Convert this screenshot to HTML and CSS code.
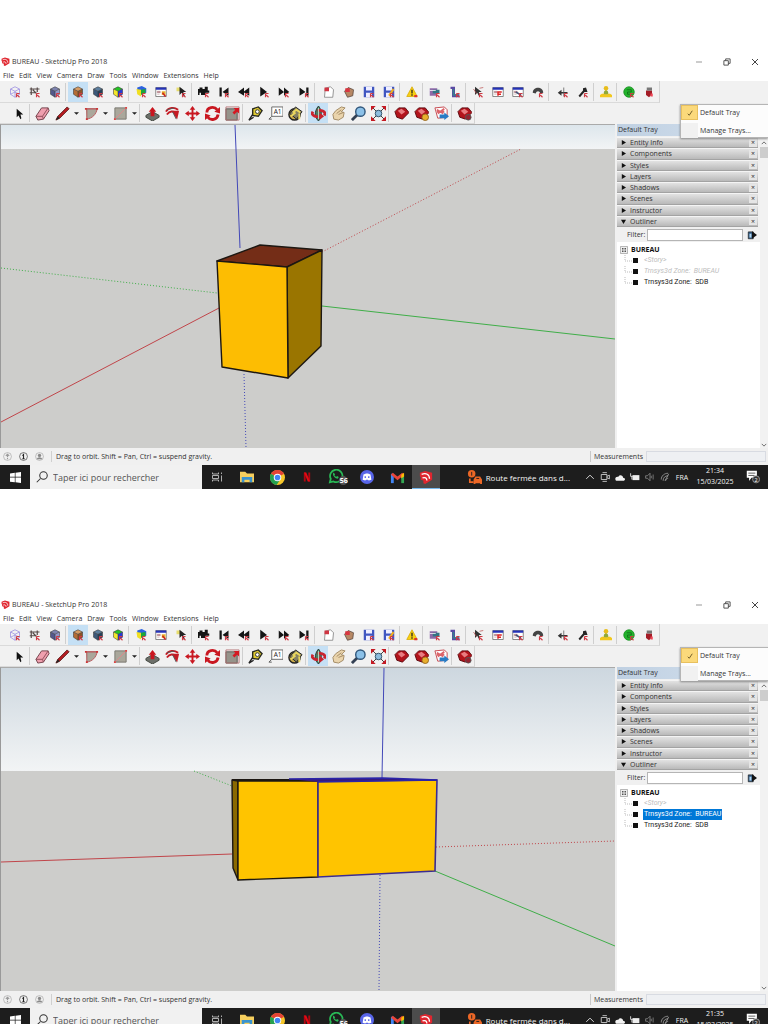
FILE: index.html
```html
<!DOCTYPE html>
<html lang="fr">
<head>
<meta charset="utf-8">
<meta name="viewport" content="width=device-width, initial-scale=1">
<title>BUREAU - SketchUp Pro 2018</title>
<link rel="stylesheet" href="styles.css">
</head>
<body>
<main class="page" id="page"></main>
<script src="app.js"></script>
</body>
</html>
```

FILE: styles.css
```css
* { box-sizing: border-box; }
body { margin: 0; background: #fff; font-family: "Open Sans", "Noto Sans", sans-serif; font-size: 7px; line-height: 11px; color: #333; }
button, input { font: inherit; color: inherit; border: 0; padding: 0; margin: 0; background: none; }
ul { list-style: none; margin: 0; padding: 0; }
a { color: inherit; text-decoration: none; }
svg { display: block; flex: none; }

.page { height: 100vh; overflow: hidden; display: flex; flex-direction: column; gap: 108px; padding-top: 54px; }
.window { flex: none; position: relative; }

.titlebar { display: flex; align-items: center; height: 15px; gap: 2px; padding: 0 9px 0 1px; }
.titlebar h1 { font-size: 7px; font-weight: 400; margin: 0; flex: 1; }
.controls { display: flex; gap: 20px; }
.menubar { display: flex; gap: 5px; height: 12px; padding-left: 3px; }

.toolbars { background: #f1f1f1; }
.toolbar { display: flex; align-items: center; height: 22px; width: max-content; border-right: 1px solid #d3d3d3; border-bottom: 1px solid #dadada; padding-left: 5px; }
.toolbar.large { padding-left: 9px; height: 21px; }
.tool { width: 20px; height: 20px; display: grid; place-items: center; }
.tool.active { background: #c5e0f5; }
.tool svg { width: 12px; height: 12px; }
.large .tool svg { width: 15px; height: 15px; }
.sep { width: 3px; height: 18px; border-left: 1px solid #cfcfcf; }
.sep.wide { width: 5px; }
.drop { width: 9px; height: 20px; display: grid; place-items: center; }

.workspace { display: grid; grid-template-columns: minmax(0, 1fr) 153px; height: 324px; background: #f0f0f0; }
.view { border-left: 1px solid #999; border-top: 1px solid #aaa; }
.view svg { width: 100%; height: 100%; }
.tray { display: grid; grid-template-columns: minmax(0, 1fr) 8px; padding-left: 2px; }
.tray-main { display: flex; flex-direction: column; }
.tray-title { margin: 0; font-size: 7px; font-weight: 400; height: 12px; padding-left: 1px; background: linear-gradient(90deg, #bfd0e2, #d5e1ee); }
.panels { display: grid; grid-auto-rows: 1fr; height: 91px; padding: 1px 2px 0 0; }
.panel { display: flex; align-items: center; gap: 4px; padding: 0 1px 0 4px; background: linear-gradient(#e2e2e2, #b9b9b9); border-top: 1px solid #f4f4f4; border-bottom: 1px solid #a3a3a3; line-height: 9px; }
.panel span { flex: 1; }
.panel button { width: 8px; height: 8px; background: #e5e5e5; line-height: 7px; font-size: 7px; }
.filter { display: flex; align-items: center; gap: 2px; height: 15px; padding: 0 1px 0 10px; }
.filter input { flex: 1; min-width: 0; height: 12px; background: #fff; border: 1px solid #b5b5b5; }
.filter button { width: 14px; display: grid; place-items: center; }
.tree { flex: 1; background: #fff; padding: 2px 0 0 3px; }
.node { display: flex; align-items: center; gap: 3px; height: 11px; }
.node.root { font-weight: 700; color: #111; }
.node.child { color: #222; padding-left: 4px; font-family: Roboto, "Open Sans", sans-serif; }
.node.hiddenzone { color: #bdbdbd; font-style: italic; }
.node .label { white-space: pre; padding: 0 1px; }
.node.selected .label { background: #0078d7; color: #fff; }
.scroll { display: flex; flex-direction: column; align-items: center; padding: 17px 0 1px; background: #f2f2f2; }
.thumb { width: 8px; height: 11px; background: #cdcdcd; margin-top: 2px; }
.scroll .down { margin-top: auto; }

.popup { position: absolute; right: 0; top: 50px; width: 88px; height: 34px; background: #fcfcfc; border: 1px solid #b5b5b5; border-right: 0; box-shadow: 0 1px 2px #0006; display: flex; flex-direction: column; gap: 3px; }
.popup button { display: flex; align-items: center; gap: 2px; height: 15px; text-align: left; }
.popup i { width: 17px; height: 15px; display: grid; place-items: center; background: #f1f1f1; }
.popup .checked i { background: #fbd97b; border: 1px solid #e8c05e; }

.status { display: flex; align-items: center; height: 17px; background: #f0f0f0; padding: 0 2px 0 3px; gap: 7px; }
.status p { margin: 0; flex: 1; border-left: 1px solid #d0d0d0; padding-left: 4px; }
.status label { border-left: 1px solid #c8c8c8; padding-left: 3px; }
.status .measure { width: 120px; height: 11px; border: 1px solid #d8dbe2; margin-left: -4px; background: #eef0f3; }

.taskbar { display: flex; height: 24px; background: #1d1d1d; color: #f4f4f4; }
.taskbar button { display: grid; place-items: center; }
.start { width: 30px; }
.search { width: 172px; display: flex; align-items: center; gap: 5px; padding-left: 6px; background: #f1f1f1; color: #444; font-size: 9px; }
.search input { flex: 1; min-width: 0; }
.search input::placeholder { color: #555; opacity: 1; }
.apps { display: flex; }
.apps button { width: 30px; }
.apps .active { background: #4c4c4c; border-bottom: 1px solid #76b9ed; width: 28px; }
.news { display: flex; align-items: center; gap: 4px; font-size: 8px; margin-left: auto; }
.system { display: flex; align-items: center; margin-left: 12px; }
.system button { width: 15px; }
.system .lang { width: 20px; font-size: 7px; }
.clock { width: 46px; text-align: center; font-size: 7px; line-height: 11px; height: 24px; }
.system .notes { width: 30px; }
```

FILE: app.js
```js
const svg = (body, w = 12, h = w, box = '0 0 16 16') =>
  `<svg width="${w}" height="${h}" viewBox="${box}" aria-hidden="true" fill="none">${body}</svg>`;

// Small red arrow shared by the simulation plug-in tools
const mark = '<path d="M10 10v5M10 10h4M11 12l3 3" stroke="#cf3a44" stroke-width="1.5"/>';
const film = inner => `<g fill="#151515">${inner}</g>${mark}`;
const cube = (top, left, right) =>
  `<path d="M2 4l6-3 6 3-6 3z" fill="${top}"/><path d="M2 4l6 3v8l-6-4z" fill="${left}"/><path d="M14 4L8 7v8l6-4z" fill="${right}"/><path d="M2 4l6-3 6 3v7l-6 4-6-4zM2 4l6 3 6-3M8 7v8" stroke="#333" stroke-width=".7"/>`;
const dialog = '<path d="M1 2h14v12H1z" fill="#fff" stroke="#666"/><path d="M1 2h14v3H1z" fill="#2432b8"/><path d="M3 7h4v2H3zM3 11h3" fill="#b89" stroke="#a77" stroke-width=".6"/>';
const floppy = '<path d="M1 1h14v14H1z" fill="#4056c0"/><path d="M4 1h8v5H4zM4 9h8v6H4z" fill="#eef"/>';
const ruby = '<path d="M1 6l4-4 7 0 4 5-7 7-6-2z" fill="#b3141c" stroke="#5d0b10"/><path d="M4 5l4-2 4 3-4 3z" fill="#e97c80"/>';

const art = {
  wire: '<path d="M2 4l6-3 6 3v7l-6 4-6-4zM2 4l6 3 6-3M8 7v8M2 11l6-3 6 3" stroke="#9a8ce0"/>' + mark,
  hiddenLine: '<path d="M1 4h13M3 2v10M1 9h8M11 2v6M5 5l5 5" stroke="#574b49" stroke-width="1.6"/>' + mark,
  xray: cube('#7d83ae', '#53588a', '#9297c8') + mark,
  shaded: cube('#d59a62', '#b36c35', '#8f5228') + mark,
  textured: cube('#5c7e9e', '#3c5878', '#264059') + mark,
  color: cube('#23c423', '#f3e72b', '#2739d8') + mark,
  colorEdit: '<path d="M3 2l6-2 6 3v6l-7 2-5-3z" fill="#2c62e0"/><path d="M2 4l6 1v9l-5-3z" fill="#f0df21"/><path d="M8 5l6-1v5l-6 3z" fill="#1fa636"/>' + mark,
  panel: dialog + '<path d="M9 7h5v5H9z" fill="#e8b32e"/><path d="M10 9l4 5" stroke="#c22" stroke-width="2"/>',
  pick: '<path d="M2 2h5v5H2z" fill="#e7dd6c"/><path d="M6 1v11l3-3 2 5 2-1-2-5h4z" fill="#222"/>' + mark,
  camera: film('<path d="M2 2h4v2h3V1h4v5h2v3H2v3H0V4h2z"/><path d="M4 8h6v4H4z"/>'),
  first: film('<path d="M2 2h3v12H2zM14 2v11L6 8z"/>'),
  rewind: film('<path d="M8 2v11L0 8zM15 2v11L7 8z"/>'),
  play: film('<path d="M3 1l9 7-9 6z"/>'),
  forward: film('<path d="M1 2l7 6-7 5zM8 2l7 6-7 5z"/>'),
  last: film('<path d="M2 2l8 6-8 5zM11 2h3v11h-3z"/>'),
  doc: '<path d="M3 3l7-2 4 4-1 10H2z" fill="#fff" stroke="#777"/><path d="M2 2h6v5H2z" fill="#cf3542"/>',
  folder: '<path d="M2 7l5-5 7 3-1 8-7 2z" fill="#b78865" stroke="#54433a"/><path d="M3 3h6v5H3z" fill="#d83540"/>',
  save: floppy + mark,
  saveAs: floppy + '<path d="M7 12l6-9 2 2-6 9z" fill="#f2ad1d"/>' + mark,
  warn: '<path d="M8 1l7 13H1z" fill="#f9cf11" stroke="#d5a900"/><path d="M8 5v5M8 11v2" stroke="#222" stroke-width="1.7"/><path d="M11 12h4v3h-4z" fill="#d33"/>',
  zoneA: '<path d="M1 3h10v10H1z" fill="#8f6aa8"/><path d="M5 5h9v5H5z" fill="#327584"/><path d="M1 6h8" stroke="#fff"/>' + mark,
  zoneB: '<path d="M2 1h6v10h6v4H4V4H2z" fill="#5a49a3"/><path d="M6 4v8h7" stroke="#35828c" stroke-width="2"/>' + mark,
  cursorMark: '<path d="M4 1v11l3-3 2 4 2-1-2-4h4z" fill="#333"/><path d="M10 3l5-1M2 4l4 6" stroke="#b55"/>' + mark,
  dlgA: dialog + '<path d="M8 7v6M8 8h5M8 11h4" stroke="#d22" stroke-width="2"/>',
  dlgB: dialog + '<path d="M5 8l7 4" stroke="#457" stroke-width="2"/>' + mark,
  gauge: '<path d="M1 9c0-9 14-9 14 0l-4 1c-1-4-5-4-6 0z" fill="#444"/>' + mark,
  arrows: '<path d="M1 9l5-4v3h8v2H6v3z" fill="#333"/><path d="M9 2v12" stroke="#555"/>' + mark,
  wrench: '<path d="M12 2l-4 1v3l-6 7 2 2 6-7h4z" fill="#252525"/>' + mark,
  axes: '<path d="M8 4v5l-6 4M8 9l6 4" stroke="#e5b911" stroke-width="2"/><circle cx="8" cy="3" r="3" fill="#e8bd1c"/><circle cx="8" cy="9" r="3" fill="#8fa83a"/><path d="M0 12l3-2 3 2v3H0zM10 12l3-2 3 2v3h-6zM6 11h4v4H6z" fill="#f2c81d"/>',
  green: '<circle cx="8" cy="8" r="7" fill="#22b32c" stroke="#148b1e"/><path d="M5 5h6v3H6v3h3" stroke="#116516"/>' + mark,
  bug: '<path d="M4 6h8v5l-4 4-4-3z" fill="#a31b25"/><path d="M5 2h7v4H5z" fill="#777"/><path d="M10 10h3v4h-3z" fill="#e45"/>',

  select: '<path d="M5 3v9l2-2 2 4 1-1-1-4h3z" fill="#111"/>',
  eraser: '<path d="M1 11L7 2h7l1 3-6 9-6 1z" fill="#ef9fae" stroke="#71404a"/><path d="M1 11h7l6-9M8 11l1 3" stroke="#8d4d58"/>',
  pencil: '<path d="M1 15l2-4L13 1l2 2L5 13z" fill="#b81c21" stroke="#62201f"/><path d="M1 15l2-4 2 2z" fill="#222"/>',
  arc: '<path d="M2 3h12C13 9 9 13 3 14z" fill="#aaa79b"/><path d="M2 3h12C13 9 9 13 3 14V3L14 3" stroke="#b8555a"/><path d="M1 2h2v2H1zM13 2h2v2h-2zM2 13h2v2H2z" fill="#c33"/>',
  rect: '<path d="M2 2h12v12H2z" fill="#aaa79b" stroke="#77766e"/><path d="M2 14L14 2" stroke="#df888b"/><path d="M1 13h2v2H1zM13 1h2v2h-2z" fill="#d44"/>',
  push: '<path d="M1 10l7-4 7 4v2l-7 4-7-4z" fill="#6d706a" stroke="#40443e"/><path d="M6 11V6H4l4-5 4 5h-2v5z" fill="#c9161f"/>',
  follow: '<path d="M1 6C4 1 10 1 14 4M2 9c3-4 7-4 10-1" stroke="#c51a23" stroke-width="2"/><path d="M8 5l7 0-2 9-3-4z" fill="#c51a23"/><path d="M2 4l8-2M8 6l4 8" stroke="#555"/>',
  move: '<path d="M8 0l3 4H9v3h3V5l4 3-4 3V9H9v3h2l-3 4-3-4h2V9H4v2L0 8l4-3v2h3V4H5z" fill="#c91720"/>',
  rotate: '<path d="M2 7c0-6 8-7 11-3M14 9c-1 6-8 7-11 3" stroke="#c91720" stroke-width="3"/><path d="M16 1v7l-6-2zM0 15V8l6 2z" fill="#c91720"/>',
  scale: '<path d="M1 3h12v12H1z" fill="#96938a" stroke="#55534e"/><path d="M1 1h14v14H1z" stroke="#b8777a"/><path d="M8 7l3-3-2-2h6v6l-2-2-3 3z" fill="#d51822"/>',
  tape: '<path d="M5 3l6-2 4 4-4 6-6-1z" fill="#dfca31" stroke="#292a1e" stroke-width="1.5"/><circle cx="10" cy="6" r="2" fill="#fff" stroke="#333"/><path d="M5 9l-4 6 5-3" stroke="#222" stroke-width="1.5"/>',
  label: '<path d="M4 1h12v10H4z" fill="#fff" stroke="#666"/><path d="M4 11l-3 3h3" stroke="#555"/><text x="6" y="9" font-size="7" fill="#222">A1</text>',
  paint: '<circle cx="7" cy="9" r="6" fill="#c8a949" stroke="#222" stroke-width="1.5"/><path d="M2 8l6-7 7 5-6 8z" fill="#858062" stroke="#222"/><path d="M5 7l4-3 4 3M3 11l5-4M12 8v6" stroke="#ead65d" stroke-width="2"/>',
  orbit: '<path d="M8 0c-5 6-4 12 0 16 4-5 4-11 0-16z" fill="#4c7d60" stroke="#243d35"/><path d="M2 6c-3 5 5 6 9 5M14 10c3-4-3-6-7-5" stroke="#c9242f" stroke-width="3"/><path d="M8 2v12" stroke="#b8d5c3"/><path d="M9 7l5 4-5 4z" fill="#c9242f"/>',
  pan: '<path d="M3 14l-1-5 3-4 6-4 4 1-4 4 3 1-1 5-5 3z" fill="#ead4ac" stroke="#a18963"/><path d="M6 8l5-4M8 9l5-2" stroke="#a18963"/>',
  zoom: '<path d="M1 15l6-6" stroke="#334053" stroke-width="3"/><circle cx="10" cy="6" r="5" fill="#8cc1e8" stroke="#31577b" stroke-width="1.5"/>',
  extents: '<path d="M2 2l12 12M14 2L2 14" stroke="#333"/><path d="M0 0h5L0 5zM16 0v5l-5-5zM0 16v-5l5 5zM16 16h-5l5-5z" fill="#c51922"/><circle cx="8" cy="8" r="3.5" fill="#8ebddd" stroke="#2c4d66"/>',
  ware: ruby,
  wareShare: ruby + '<circle cx="12" cy="12" r="3.5" fill="#e8af2d" stroke="#956620"/>',
  layout: '<path d="M1 2l10-1 3 3v8l-10 1z" fill="#fff" stroke="#c4454c"/><path d="M3 4l7 4M4 8l7-5M3 6h8" stroke="#db646a" stroke-width="2"/><path d="M6 9h5V7l5 4-5 4v-2H6z" fill="#287bc4"/>',
  extension: ruby + '<circle cx="12" cy="12" r="3" fill="#972330" stroke="#555"/>'
};

const smallTools = 'wire hiddenLine xray | shaded* textured color | colorEdit panel pick | camera first rewind play forward last || doc folder save saveAs | warn | zoneA zoneB | cursorMark dlgA dlgB gauge || arrows wrench | axes | green bug';
const largeTools = 'select | eraser pencil+ arc+ rect+ | push follow move rotate scale | tape label paint | orbit* pan zoom extents | ware wareShare layout | extension';

const arrowDown = svg('<path d="M0 0h6L3 3z" fill="#222"/>', 5, 3, '0 0 6 3');
const tools = list => list.split(' ').map(item => {
  if (item === '|') return '<span class="sep"></span>';
  if (item === '||') return '<span class="sep wide"></span>';
  const name = item.replace(/[*+]/, '');
  const button = `<button class="tool${item.endsWith('*') ? ' active' : ''}" aria-label="${name}">${svg(art[name])}</button>`;
  return button + (item.endsWith('+') ? `<button class="drop" aria-label="${name} options">${arrowDown}</button>` : '');
}).join('');

const logo = size => svg('<path d="M1 3l6-2 8 2v8l-8 5-2-1v-3l-3-1V8L1 7z" fill="#e0262f"/><path d="M3 5c5-2 9 0 9 5M4 9c3-1 5 0 5 3" stroke="#fff" stroke-width="1.5"/>', size);

const line = (x1, y1, x2, y2, color, dotted) =>
  `<path d="M${x1} ${y1}L${x2} ${y2}" stroke="${color}"${dotted ? ' stroke-dasharray="1 2"' : ''} stroke-width="1"/>`;
const red = '#c0454a', green = '#3fae48', blue = '#4248b8';

const sky = (id, y, h, from) => `<defs><linearGradient id="${id}" x2="0" y2="1"><stop stop-color="${from}"/><stop offset="1" stop-color="#f2f4f5"/></linearGradient></defs>
  <path d="M0 ${y}h616v${h}H0z" fill="url(#${id})"/>`;

const sceneOne = `<svg viewBox="1 125 614 323" preserveAspectRatio="none" role="img" aria-label="Zone SDB">
  <path d="M0 125h616v324H0z" fill="#cdcdcb"/>${sky('skyOne', 125, 24, '#dde6ec')}
  ${line(235, 125, 240, 248, blue)}${line(244, 374, 246, 448, blue, 1)}
  ${line(1, 422, 219, 308, red)}${line(322, 252, 521, 149, red, 1)}
  ${line(322, 306, 615, 339, green)}${line(1, 268, 217, 293, green, 1)}
  <g stroke="#1c1712" stroke-width="1.4" stroke-linejoin="round">
  <path d="M217 261l43-16 62 5-35 17z" fill="#742d17"/>
  <path d="M287 267l35-17-1 96-33 32z" fill="#9a7500"/>
  <path d="M217 261l70 6 1 111-66-11z" fill="#fdbd02"/></g></svg>`;

const sceneTwo = `<svg viewBox="1 668 614 323" preserveAspectRatio="none" role="img" aria-label="Zones BUREAU et SDB">
  <path d="M0 668h616v324H0z" fill="#cdcdcb"/>${sky('skyTwo', 668, 103, '#cdd7df')}
  ${line(384, 668, 382, 778, blue)}${line(380, 875, 379, 991, blue, 1)}
  ${line(1, 862, 232, 854, red)}${line(436, 847, 615, 841, red, 1)}
  ${line(435, 871, 615, 946, green)}${line(194, 771, 232, 786, green, 1)}
  <g stroke="#1c1712" stroke-width="1.4" stroke-linejoin="round">
  <path d="M232 780l6 1v99l-5-12z" fill="#8a6900"/>
  <path d="M238 781h80v96l-80 3z" fill="#ffc400"/>
  <path d="M232 780h86" stroke-width="2"/></g>
  <path d="M318 781l119-1-2 91-117 6z" fill="#ffc400" stroke="#3b2c91" stroke-width="1.6"/>
  <path d="M289 779l94-1 54 2-119 2" fill="#371b7e" stroke="#2b24a8" stroke-width="1.5"/></svg>`;

const menus = ['File', 'Edit', 'View', 'Camera', 'Draw', 'Tools', 'Window', 'Extensions', 'Help'];
const panels = ['Entity Info', 'Components', 'Styles', 'Layers', 'Shadows', 'Scenes', 'Instructor', 'Outliner'];

const triangle = open => svg(open ? '<path d="M0 1h6L3 6z" fill="#111"/>' : '<path d="M1 0l5 3-5 3z" fill="#111"/>', 5, 5, '0 0 6 6');
const branch = svg('<path d="M1 0v6h7" stroke="#bbb" stroke-dasharray="1 1"/><path d="M9 3h5v5H9z" fill="#111"/>', 16, 11, '0 0 16 11');
const node = (label, cls = '') => `<li class="node child ${cls}">${branch}<span class="label">${label}</span></li>`;
const chevron = down => svg(`<path d="${down ? 'M1 1l3 3 3-3' : 'M1 4l3-3 3 3'}" stroke="#444"/>`, 6, 4, '0 0 8 5');

const apps = [
  ['Task view', svg('<path d="M2 2v2h8V2M2 14v-2h8v2M2 6h8v4H2zM14 2v2M14 6v8" stroke="#ddd"/>')],
  ['Explorer', svg('<path d="M0 2h6l2 2h8v10H0z" fill="#f6cf5e"/><path d="M2 8h12v6h-3v-3H5v3H2z" fill="#3993d0"/>', 14)],
  ['Chrome', svg('<circle cx="8" cy="8" r="8" fill="#f6c629"/><path d="M8 8L1 4a8 8 0 0 1 14 0z" fill="#e34335"/><path d="M8 8L1 4a8 8 0 0 0 6 12l4-6z" fill="#24a150"/><circle cx="8" cy="8" r="4" fill="#fff"/><circle cx="8" cy="8" r="3" fill="#4285f4"/>', 15)],
  ['Netflix', svg('<path d="M5 2v12M11 2v12" stroke="#b00710" stroke-width="2.5"/><path d="M4 2h3l5 12H9z" fill="#e50914"/>')],
  ['WhatsApp', svg('<path d="M2 15l1-4a7 7 0 1 1 3 3z" stroke="#29b956" stroke-width="2"/><path d="M6 4c-2 3 2 7 5 7l1-2-2-1-1 1-2-2 1-1z" fill="#29b956"/><circle cx="17" cy="13" r="5" fill="#555"/><text x="13" y="16" font-size="8" font-weight="700" fill="#fff">56</text>', 22, 16, '-2 0 24 18')],
  ['Discord', svg('<circle cx="8" cy="8" r="8" fill="#5865e8"/><path d="M4 5l3-1h2l3 1 1 6-3 1-1-1H7l-1 1-3-1z" fill="#fff"/><path d="M6 7v2M10 7v2" stroke="#5865e8" stroke-width="1.5"/>', 14)],
  ['Gmail', svg('<path d="M1 4h3v10H1z" fill="#4285f4"/><path d="M12 4h3v10h-3z" fill="#34a853"/><path d="M2 4l6 5 6-5" stroke="#e9453a" stroke-width="3"/><path d="M12 5l3-2v4l-3 2z" fill="#fbbc04"/>', 15)],
  ['SketchUp', logo(14), 'active']
];

const tray = [
  ['More', '<path d="M2 11l6-6 6 6" stroke="#ddd" stroke-width="1.5"/>'],
  ['Meet', '<path d="M2 4h9v8H2zM11 7l4-2v6l-4-2M4 1h7M4 15h7" stroke="#ddd" stroke-width="1.3"/>'],
  ['OneDrive', '<path d="M1 13c-2-4 2-6 4-5 2-5 8-3 8 1 4 0 4 5 0 5H2z" fill="#f2f2f2"/>'],
  ['Battery', '<path d="M4 5h11v8H4z" fill="#eee"/><path d="M1 2v5h4M3 7v5" stroke="#ddd" stroke-width="1.5"/>'],
  ['Volume', '<path d="M1 6h3l4-4v12l-4-4H1zM10 6v4M13 4v8" stroke="#aaa"/>'],
  ['Pen', '<path d="M2 12C2 6 7 2 13 2M5 14c0-5 3-8 8-8M8 14L14 3M9 14c0-2 2-4 4-4" stroke="#aaa" stroke-width="1.2"/>']
];

const status = ['<path d="M8 4v5M5 7l3-3 3 3M8 10v3" stroke="#999" stroke-width="2"/>', '<path d="M8 3v10M6 6h3M6 12h4" stroke="#222" stroke-width="2"/>', '<circle cx="8" cy="6" r="3" fill="#888"/><path d="M3 13c1-5 9-5 10 0z" fill="#888"/>'];

const appWindow = ({ id, scene, bureau, time }) => `
<section class="window" aria-label="SketchUp ${time}">
  <header class="titlebar">${logo(9)}<h1>BUREAU - SketchUp Pro 2018</h1>
    <div class="controls">
      <button aria-label="Minimize">${svg('<path d="M1 4h6" stroke="#999"/>', 8, 8, '0 0 8 8')}</button>
      <button aria-label="Restore">${svg('<path d="M1 3h5v5H1zM3 3V1h5v5H6" stroke="#444"/>', 8, 8, '0 0 9 9')}</button>
      <button aria-label="Close">${svg('<path d="M1 1l6 6M7 1L1 7" stroke="#444"/>', 8, 8, '0 0 8 8')}</button>
    </div></header>
  <nav class="menubar">${menus.map(m => `<button>${m}</button>`).join('')}</nav>
  <div class="toolbars"><div class="toolbar">${tools(smallTools)}</div><div class="toolbar large">${tools(largeTools)}</div></div>
  <div class="workspace">
    <div class="view">${scene}</div>
    <aside class="tray">
      <div class="tray-main">
        <h2 class="tray-title">Default Tray</h2>
        <div class="panels">${panels.map(p => `<div class="panel">${triangle(p === 'Outliner')}<span>${p}</span><button aria-label="Close ${p}">×</button></div>`).join('')}</div>
        <div class="filter"><label for="filter${id}">Filter:</label><input id="filter${id}" type="text">
          <button aria-label="Details">${svg('<path d="M2 3h8v11H2z" fill="#345d86" stroke="#111"/><path d="M8 2l8 6-8 6z" fill="#111"/><path d="M4 6h3v6H4z" fill="#b4d6ee"/>', 10)}</button></div>
        <ul class="tree">
          <li class="node root">${svg('<path d="M1 1h14v14H1z" fill="#eee" stroke="#777"/><path d="M4 4h3v3H4zM9 4h3v3H9zM4 9h3v3H4zM9 9h3v3H9z" fill="#555"/>', 8)}<span>BUREAU</span></li>
          ${node('&lt;Story&gt;', 'hiddenzone')}${node('Trnsys3d Zone:  BUREAU', bureau)}${node('Trnsys3d Zone:  SDB')}
        </ul>
      </div>
      <div class="scroll">${chevron(false)}<div class="thumb"></div><div class="down">${chevron(true)}</div></div>
    </aside>
  </div>
  <div class="popup"><button class="checked"><i>${svg('<path d="M1 5l2 2 4-6" stroke="#4a3a10"/>', 6, 6, '0 0 8 8')}</i>Default Tray</button><button><i></i>Manage Trays...</button></div>
  <div class="status">${status.map((s, i) => svg(`<circle cx="8" cy="8" r="7" stroke="${i === 1 ? '#222' : '#999'}"/>${s}`, 9)).join('')}
    <p>Drag to orbit. Shift = Pan, Ctrl = suspend gravity.</p><label for="measure${id}">Measurements</label><input class="measure" id="measure${id}" type="text"></div>
  <footer class="taskbar">
    <button class="start" aria-label="Start">${svg('<path d="M0 2l7-1v6H0zM8 1l8-1v7H8zM0 8h7v7l-7-1zM8 8h8v8l-8-1z" fill="#fff"/>', 11)}</button>
    <label class="search">${svg('<circle cx="10" cy="6" r="5" stroke="#333" stroke-width="1.4"/><path d="M6 10l-5 5" stroke="#333" stroke-width="1.4"/>')}<input type="search" placeholder="Taper ici pour rechercher" aria-label="Rechercher"></label>
    <div class="apps">${apps.map(([n, s, c = '']) => `<button class="${c}" aria-label="${n}">${s}</button>`).join('')}</div>
    <a class="news" href="#">${svg('<circle cx="5" cy="4" r="4" fill="#ec6726"/><path d="M5 2v4" stroke="#222"/><path d="M3 9v4h4" stroke="#ec6726" stroke-width="1.8"/><path d="M7 10l2-3h5l2 3v5h-2v-1H9v1H7z" fill="#ec6726"/><path d="M10 9h3" stroke="#1d1d1d"/>', 15)}Route fermée dans d...</a>
    <div class="system">${tray.map(([n, s]) => `<button aria-label="${n}">${svg(s, 10)}</button>`).join('')}<button class="lang">FRA</button>
      <div class="clock">${time}<br>15/03/2025</div>
      <button class="notes" aria-label="Notifications">${svg('<path d="M1 1h13v9H7l-3 4v-4H1z" fill="#fff"/><path d="M3 4h9M3 7h8" stroke="#333"/><circle cx="13" cy="12" r="4.5" fill="#333" stroke="#aaa"/><text x="11" y="15" font-size="7" fill="#fff">2</text>', 14, 14, '0 0 18 18')}</button>
    </div>
  </footer>
</section>`;

document.getElementById('page').innerHTML =
  appWindow({ id: 1, scene: sceneOne, bureau: 'hiddenzone', time: '21:34' }) +
  appWindow({ id: 2, scene: sceneTwo, bureau: 'selected', time: '21:35' });
```
